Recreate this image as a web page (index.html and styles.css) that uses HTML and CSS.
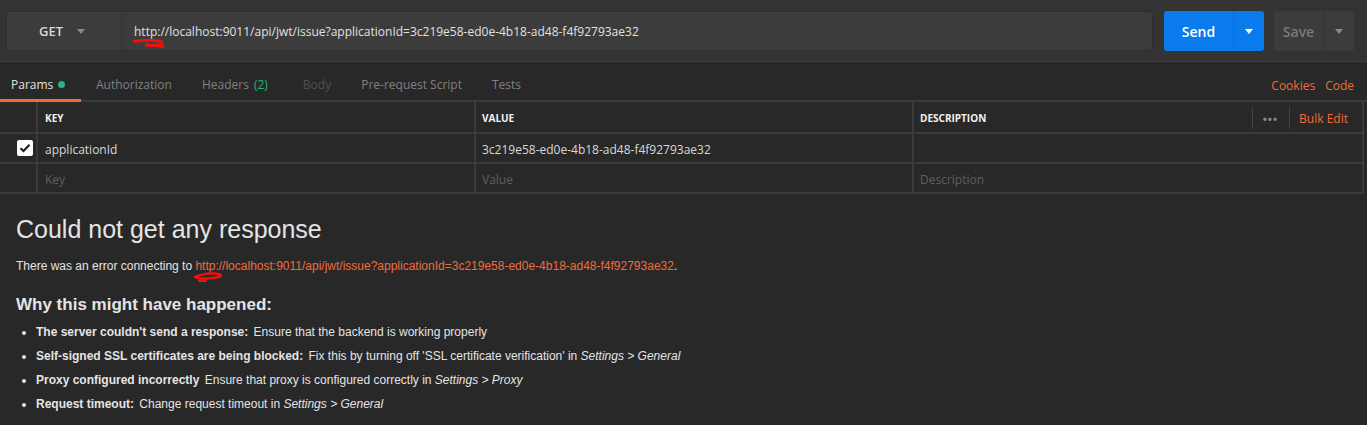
FILE: index.html
```html
<!DOCTYPE html>
<html lang="en">
<head>
    <meta charset="UTF-8">
    <title>Postman - Request</title>
    <link rel="stylesheet" href="styles.css">
</head>
<body>
    <div class="app">
        <div class="request-bar">
            <div class="url-group">
                <div class="method">
                    <span>GET</span>
                    <span class="caret caret-grey"></span>
                </div>
                <div class="url">http://localhost:9011/api/jwt/issue?applicationId=3c219e58-ed0e-4b18-ad48-f4f92793ae32</div>
            </div>
            <div class="split-btn send">
                <span class="btn-label">Send</span>
                <span class="btn-drop"><span class="caret caret-white"></span></span>
            </div>
            <div class="split-btn save">
                <span class="btn-label">Save</span>
                <span class="btn-drop"><span class="caret caret-grey"></span></span>
            </div>
        </div>

        <div class="tabs">
            <div class="tab active">Params <span class="dot"></span></div>
            <div class="tab">Authorization</div>
            <div class="tab headers">Headers <span class="count">(2)</span></div>
            <div class="tab disabled">Body</div>
            <div class="tab">Pre-request Script</div>
            <div class="tab">Tests</div>
            <div class="tab-links">
                <span>Cookies</span>
                <span>Code</span>
            </div>
        </div>

        <div class="params">
            <div class="row head">
                <div class="cell cb"></div>
                <div class="cell key">KEY</div>
                <div class="cell">VALUE</div>
                <div class="cell desc-head">
                    <span>DESCRIPTION</span>
                    <div class="head-tools">
                        <span class="more">&bull;&bull;&bull;</span>
                        <span class="bulk">Bulk Edit</span>
                    </div>
                </div>
            </div>
            <div class="row">
                <div class="cell cb">
                    <span class="checkbox">
                        <svg width="12" height="10" viewBox="0 0 12 10"><path d="M1.5 5.2 L4.5 8 L10.5 1.8" fill="none" stroke="#222" stroke-width="2.2"/></svg>
                    </span>
                </div>
                <div class="cell key">applicationId</div>
                <div class="cell">3c219e58-ed0e-4b18-ad48-f4f92793ae32</div>
                <div class="cell"></div>
            </div>
            <div class="row">
                <div class="cell cb"></div>
                <div class="cell key placeholder">Key</div>
                <div class="cell placeholder">Value</div>
                <div class="cell placeholder">Description</div>
            </div>
        </div>

        <div class="response">
            <h1>Could not get any response</h1>
            <p class="error">There was an error connecting to <a>http://localhost:9011/api/jwt/issue?applicationId=3c219e58-ed0e-4b18-ad48-f4f92793ae32</a>.</p>
            <h2>Why this might have happened:</h2>
            <ul>
                <li><b>The server couldn't send a response:</b> Ensure that the backend is working properly</li>
                <li><b>Self-signed SSL certificates are being blocked:</b> Fix this by turning off 'SSL certificate verification' in <i>Settings &gt; General</i></li>
                <li><b>Proxy configured incorrectly</b> Ensure that proxy is configured correctly in <i>Settings &gt; Proxy</i></li>
                <li><b>Request timeout:</b> Change request timeout in <i>Settings &gt; General</i></li>
            </ul>
        </div>

        <!-- red pen marks drawn over the screenshot -->
        <svg class="scribble" width="1367" height="425" viewBox="0 0 1367 425">
            <path d="M134 41.5 Q148 39.5 159 41 Q165 42.5 160 44.5 Q152 46 145 45 Q156 45.5 163 46.5" fill="none" stroke="#e8140c" stroke-width="3" stroke-linecap="round"/>
            <path d="M195 277 Q204 273 214 273.5 Q223 274 220 276.5 Q212 279 199 278.5 Q194 278 198 276" fill="none" stroke="#e8140c" stroke-width="2.6" stroke-linecap="round"/>
            <path d="M199 281 L206 281" fill="none" stroke="#e8140c" stroke-width="2.2" stroke-linecap="round"/>
        </svg>
    </div>
</body>
</html>
```

FILE: styles.css
```css
:root {
    --bg: #282828;
    --bar: #333333;
    --field: #3c3c3c;
    --line: #3b3b3b;
    --text: #e1e1e1;
    --muted: #808080;
    --orange: #f26b3a;
    --green: #26b47f;
    --blue: #097bed;
}

body {
    margin: 0;
    background: var(--bg);
    font-family: "Open Sans", "Liberation Sans", sans-serif;
    color: var(--text);
}

.app {
    position: relative;
    width: 1367px;
    height: 425px;
    overflow: hidden;
}

/* request bar */
.request-bar {
    display: flex;
    height: 40px;
    padding: 11px 13px 10px 6px;
    background: var(--bar);
    border-bottom: 1px solid #3e3e3e;
}

.url-group {
    flex: 1;
    display: flex;
    background: var(--field);
    border-radius: 3px;
    border: 1px solid #2e2e2e;
    box-sizing: border-box;
}

.method {
    width: 115px;
    display: flex;
    align-items: center;
    gap: 14px;
    padding-left: 32px;
    box-sizing: border-box;
    font-size: 13px;
    font-weight: 600;
    color: #d8d8d8;
    border-right: 1px solid #333;
}

.url {
    display: flex;
    align-items: center;
    padding-left: 12px;
    font-size: 12px;
    color: var(--text);
}

.caret {
    width: 0;
    height: 0;
    border-left: 4px solid transparent;
    border-right: 4px solid transparent;
}

.caret-grey { border-top: 5px solid #8a8a8a; }
.caret-white { border-top: 5px solid #fff; }

.split-btn {
    display: flex;
    border-radius: 3px;
    font-size: 14px;
    font-weight: 600;
}

.send {
    width: 100px;
    margin-left: 11px;
    background: var(--blue);
    color: #fff;
}

.save {
    width: 80px;
    margin-left: 10px;
    background: #3c3c3c;
    color: #7a7a7a;
}

.btn-label {
    flex: 1;
    display: flex;
    align-items: center;
    justify-content: center;
}

.btn-drop {
    width: 30px;
    display: flex;
    align-items: center;
    justify-content: center;
}

.send .btn-drop { border-left: 1px solid #0a6fd6; }
.save .btn-drop { border-left: 1px solid #333; }

/* tabs */
.tabs {
    display: flex;
    height: 38px;
    border-bottom: 2px solid #3a3a3a;
    font-size: 12px;
}

.tab {
    display: flex;
    align-items: center;
    padding: 6px 15px 0;
    color: var(--muted);
    box-sizing: border-box;
}

.tab.active {
    padding: 7px 15px 0 11px;
    width: 81px;
    color: var(--text);
    border-bottom: 3px solid var(--orange);
    margin-bottom: -2px;
}

.tab.headers { padding-right: 20px; }

.tab.disabled { color: #505050; }

.dot {
    width: 7px;
    height: 7px;
    margin-left: 5px;
    border-radius: 50%;
    background: var(--green);
}

.count {
    margin-left: 5px;
    color: var(--green);
}

.tab-links {
    margin-left: auto;
    display: flex;
    align-items: center;
    gap: 10px;
    padding: 8px 13px 0 0;
    color: var(--orange);
}

/* params table */
.params {
    width: 1362px;
    border-right: 2px solid var(--line);
}

.row {
    display: grid;
    grid-template-columns: 36px 438px 438px 1fr;
    height: 28px;
    border-bottom: 2px solid var(--line);
    font-size: 12px;
}

.row.head {
    height: 30px;
    font-size: 10px;
    font-weight: 700;
}

.cell {
    display: flex;
    align-items: center;
    padding: 2px 0 0 6px;
    border-left: 2px solid var(--line);
    color: #d8d8d8;
}

.cell.key { padding-left: 7px; }

.row.head .cell { color: #f0f0f0; }

.cell.cb {
    border-left: 0;
    padding: 0 3px 0 0;
    justify-content: flex-end;
}

.row .cell.placeholder { color: #5f5f5f; }

.checkbox {
    width: 16px;
    height: 16px;
    border-radius: 2px;
    background: #fff;
    display: flex;
    align-items: center;
    justify-content: center;
}

.desc-head { justify-content: space-between; }

.head-tools {
    display: flex;
    align-items: center;
    height: 22px;
}

.more {
    height: 22px;
    display: flex;
    align-items: center;
    padding: 0 11px 0 10px;
    border-left: 1px solid #444;
    border-right: 1px solid #444;
    color: #8a8a8a;
    font-size: 11px;
    letter-spacing: 1px;
}

.bulk {
    padding: 0 14px 0 9px;
    font-size: 12px;
    font-weight: 400;
    color: var(--orange);
}

/* response */
.response {
    padding: 0 16px;
    font-family: "Liberation Sans", Arial, sans-serif;
    color: #e4e4e4;
}

.response h1 {
    margin: 21px 0 0;
    font-size: 25px;
    font-weight: 400;
}

.error {
    margin: 15px 0 0;
    font-size: 12px;
}

.error a { color: var(--orange); }

.response h2 {
    margin: 22px 0 0;
    font-size: 17px;
    font-weight: 700;
}

.response ul {
    margin: 5px 0 0;
    padding-left: 20px;
    font-size: 12px;
}

.response li {
    line-height: 24px;
}

.response li b { margin-right: 2px; }

.scribble {
    position: absolute;
    left: 0;
    top: 0;
    pointer-events: none;
}
```
